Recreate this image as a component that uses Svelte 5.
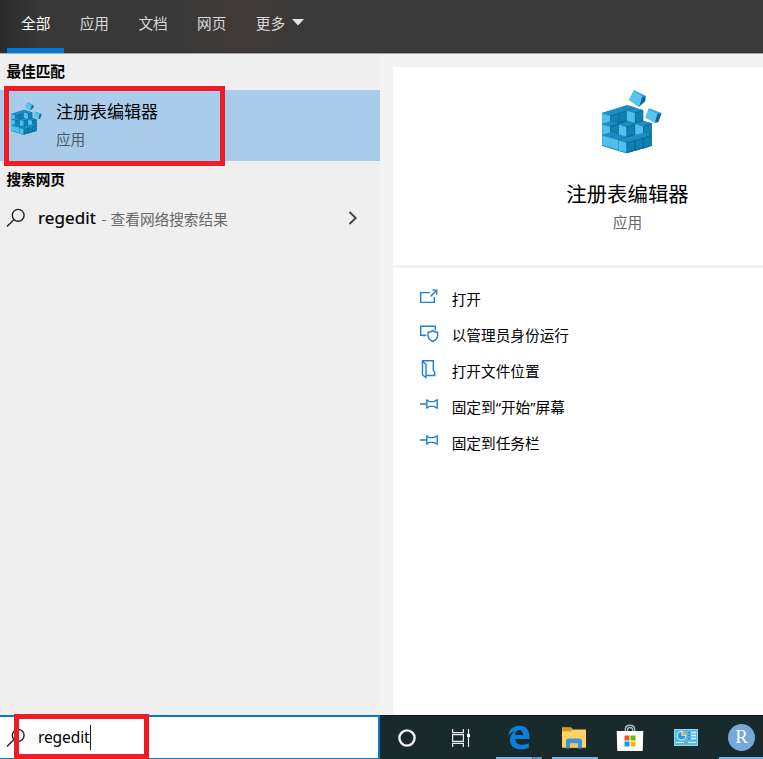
<script>
  const tabs = ['全部', '应用', '文档', '网页'];
  const actions = [
    { icon: 'open', label: '打开' },
    { icon: 'shield', label: '以管理员身份运行' },
    { icon: 'folder', label: '打开文件位置' },
    { icon: 'pin', label: '固定到“开始”屏幕' },
    { icon: 'pin', label: '固定到任务栏' }
  ];
  // Isometric cubes, back to front: left x, y of the left face's top-left corner
  const cubes = [
    [58, 64], [33, 72], [82, 72], [8, 80],
    [57, 114], [107, 112], [8, 113],
    [107, 147], [82, 154], [8, 146], [32, 153], [57, 161]
  ];
</script>

{#snippet registry(w)}
  <svg width={w} height={w * 64 / 60} viewBox="8 11 180 192">
    <path d="M8 80L82 58L131 72V103L157 111V178L82 201L8 178Z" fill="#0a6d9c" />
    {#each cubes as [x, y]}
      <g transform="translate({x} {y})">
        <path d="M0 0L25 -8L50 -1L25 7Z" fill="#1c8fc2" />
        <path d="M0 0L25 7V40L0 33Z" fill="#2b9fd0" />
        <path d="M1 2L24 9V36L1 30Z" fill="#53c0ea" />
        <path d="M25 7L50 -1V32L25 40Z" fill="#086998" />
        <path d="M27 9L48 2V29L27 36Z" fill="#107fb2" />
      </g>
    {/each}
    <path d="M105 12L139 28L126 40L98 22Z" fill="#3fb0dd" />
    <path d="M102 15L129 31L118 62L88 41Z" fill="#58c4ed" />
    <path d="M129 31L139 28L138 45L118 62Z" fill="#086a98" />
    <path d="M149 66L187 80L172 84L145 73Z" fill="#38a9d7" />
    <path d="M147 69L174 82L166 109L137 94Z" fill="#58c4ed" />
    <path d="M174 82L187 80L177 108L166 109Z" fill="#086a98" />
  </svg>
{/snippet}

{#snippet lens()}
  <svg class="lens" width="20" height="20" viewBox="0 0 20 20" fill="none" stroke="#222" stroke-width="1.4">
    <circle cx="12.2" cy="7.3" r="5.9" /><path d="M8 11.5L1 18.5" />
  </svg>
{/snippet}

<div class="screen">
  <header>
    <nav>
      {#each tabs as t, i}
        <span class="tab" class:active={i === 0}>{t}</span>
      {/each}
      <span class="tab more">更多<svg width="12" height="7" viewBox="0 0 12 7"><path d="M0 0H12L6 6.5Z" fill="#e4e4e4" /></svg></span>
    </nav>
  </header>

  <main>
    <section class="results">
      <h2>最佳匹配</h2>
      <div class="best">
        {@render registry(31)}
        <div class="names"><div class="name">注册表编辑器</div><div class="kind">应用</div></div>
        <div class="mark"></div>
      </div>
      <h2>搜索网页</h2>
      <div class="row">
        {@render lens()}
        <span class="query">regedit</span><span class="hint">- 查看网络搜索结果</span>
        <svg class="chev" width="10" height="14" viewBox="0 0 10 14" fill="none" stroke="#444" stroke-width="1.9"><path d="M1.5 1L7.7 7L1.5 13" /></svg>
      </div>
    </section>
    <section class="detail">
      <div class="hero">
        <div class="logo">{@render registry(60)}</div>
        <h1>注册表编辑器</h1>
        <p>应用</p>
      </div>
      <ul>
        {#each actions as a}
          <li>
            <svg width="20" height="20" viewBox="0 0 20 20" fill="none" stroke="#1a80dc" stroke-width="1.4">
              {#if a.icon === 'open'}
                <path d="M11 4.6H1.7V14.4H15.3V9M11.5 8.5L17.6 2.3M13.3 2.1H17.8V6.5" />
              {:else if a.icon === 'shield'}
                <path d="M7.3 11.3H1.7V2.3H16.3V6M5 11.3V12.5" />
                <path d="M13.8 6.5C12.5 7.8 10.8 8.2 9 8.2V11.5C9 14.2 11 16.2 13.8 17.5C16.6 16.2 18.6 14.2 18.6 11.5V8.2C16.8 8.2 15.1 7.8 13.8 6.5Z" />
              {:else if a.icon === 'folder'}
                <path d="M3.5 15V.8H14.3V10.5L15.7 11.7V15.5H7.3M3.5 1L7 4.6V17.5L3.5 15" />
              {:else}
                <path d="M1 8H7.5M7.8 3.2V12.8M7.8 4L10.3 5.6H14.8L18.2 3.9V12.1L14.8 10.4H10.3L7.8 12" />
              {/if}
            </svg>
            <span>{a.label}</span>
          </li>
        {/each}
      </ul>
    </section>
  </main>

  <footer>
    <div class="search">
      {@render lens()}
      <span class="typed">regedit</span><i class="caret"></i>
      <div class="mark"></div>
    </div>
    <div class="taskbar">
      <span class="task cortana"><svg width="20" height="20" viewBox="0 0 20 20"><circle cx="10" cy="10" r="7.6" fill="none" stroke="#f4f4f4" stroke-width="2.4" /></svg></span>
      <span class="task view">
        <svg width="20" height="20" viewBox="0 0 20 20" fill="none" stroke="#e8eded" stroke-width="1.2"><path d="M1.6 1V4.6H12.4V1M1.6 19V15.4H12.4V19M1.6 6.6H12.4V13.4H1.6ZM17.5 1V19" /><path d="M16 6H19V9H16Z" fill="#fff" stroke="none" /></svg>
      </span>
      <span class="task edge running">
        <svg width="24" height="25" viewBox="0 0 24 25"><path d="M1 11C2 4.2 6.7.7 12.3.7C19 .7 22.5 5.5 22.5 11.5V14H8C8.3 18 11.5 19.8 15 19.8C17.8 19.8 20 19 21.8 17.9V22.4C19.7 23.6 17 24.3 14 24.3C7.2 24.3 2.9 20.3 2.9 14.7C2.9 11.1 5 8 8.5 6.3C5.2 6.7 2.6 8.3 1 11ZM8.1 10.1H16.1C16.1 7.1 14.7 5.1 12.3 5.1C9.8 5.1 8.3 7.4 8.1 10.1Z" fill="#0b80df" /></svg>
      </span>
      <span class="task files running">
        <svg width="26" height="22" viewBox="0 0 26 22"><path d="M1 .5H10L12 2.5H25V20.5H1Z" fill="#f6c64e" /><path d="M1 .5H10L12 2.5L10 4.5H1Z" fill="#d99a1b" /><path d="M1 4.5H10.5L12 3H25V20.5H1Z" fill="#ffd367" /><path d="M5 21.5V14Q5 11.5 7.5 11.5H18.5Q21 11.5 21 14V21.5H17V16.5H9V21.5Z" fill="#3d94d9" /><path d="M9 16.5H17V20.5H9Z" fill="#f8c850" /></svg>
      </span>
      <span class="task store">
        <svg width="28" height="28" viewBox="0 0 28 28"><path d="M9.3 7V5.7Q9.3 1.3 14 1.3T18.7 5.7V7M11.5 7V5.8Q11.5 3.5 14 3.5T16.7 5.8V7" fill="none" stroke="#aeb5b5" stroke-width="1.4" /><path d="M.7 7H27.3L26.7 27H1.3Z" fill="#fff" /><path d="M8.5 11.5H13.5V16.5H8.5Z" fill="#f25022" /><path d="M14.5 11.5H19.5V16.5H14.5Z" fill="#6fb900" /><path d="M8.5 17.5H13.5V22.5H8.5Z" fill="#00a1ee" /><path d="M14.5 17.5H19.5V22.5H14.5Z" fill="#ffb900" /></svg>
      </span>
      <span class="task panel">
        <svg width="24" height="17" viewBox="0 0 24 17"><path d="M0 0H24V17H0Z" fill="#8bd5f6" /><path d="M1 1H23V16H1Z" fill="#55b9ea" /><circle cx="7.5" cy="6.8" r="4.7" fill="#e8f7ff" /><path d="M7.5 6.8V3A3.8 3.8 0 1 0 11.3 6.8Z" fill="#2b9ddf" /><path d="M8.4 6V2.5A3.6 3.6 0 0 1 12 6Z" fill="#efaa21" /><path d="M17 3.5H22M17 6.5H22M17 9.5H22" stroke="#d8f4ff" stroke-width="1.3" /><path d="M2 13.5H22" stroke="#e9faff" /><path d="M10 13.5H14" stroke="#c98b2d" stroke-width="1.5" /><path d="M15 3V4.2M15 6V7.2M15 9V10.2" stroke="#087bbc" stroke-width="1.5" /></svg>
      </span>
      <span class="task rapp running"><b>R</b></span>
    </div>
  </footer>
</div>

<style>
  :global(body) { margin: 0; overflow: hidden; }
  .screen { width: 763px; height: 759px; display: flex; flex-direction: column; overflow: hidden; background: #f3f3f3; color: #000; font-family: "Noto Sans CJK SC", "Noto Sans", sans-serif; font-size: 14.67px; }
  svg { display: block; flex: none; }
  h1, h2, p, ul { margin: 0; padding: 0; font-weight: 400; }
  header { height: 53px; box-sizing: border-box; border-bottom: 1px solid #303030; background: linear-gradient(90deg, #2b2b2b 0, #383838 40px, #3a3939 180px, #403a37 235px, #3b3a3a 300px, #3a3a3a 100%); flex: none; }
  nav { display: flex; height: 53px; padding-left: 7px; }
  .tab { box-sizing: border-box; width: 58.7px; height: 53px; padding-left: 14px; line-height: 45px; color: #d8d8d8; white-space: nowrap; }
  .tab.active { width: 57px; margin-right: 1.7px; color: #fff; border-bottom: 5px solid #0078d7; }
  .more { display: flex; align-items: center; gap: 7px; width: 80px; height: 45px; }
  main { height: 661px; border-top: 1px solid #aaa; display: flex; flex: none; }
  .results { width: 380px; background: #efefef; }
  h2 { height: 36px; line-height: 34px; padding-left: 6.5px; font-size: 14.67px; font-weight: 700; letter-spacing: -.05px; }
  .best { position: relative; height: 71px; margin-bottom: 1px; display: flex; background: #a9cceb; padding: 12px 0 0 11px; box-sizing: border-box; }
  .names { padding-left: 13.9px; margin-top: -5px; }
  .name { font-size: 17px; line-height: 28px; }
  .kind { line-height: 27px; color: #4d5a65; }
  .mark { position: absolute; box-sizing: border-box; border: 5px solid #ee1c25; }
  .best .mark { left: 4px; top: -4px; width: 221px; height: 80px; }
  .row { height: 39px; display: flex; align-items: center; padding-left: 6px; }
  .query { font: 400 17px "Noto Sans", sans-serif; width: 59px; margin-left: 12px; letter-spacing: .12px; -webkit-text-stroke: .2px #000; }
  .hint { margin-left: 4.5px; margin-top: 1px; color: #686868; word-spacing: .7px; }
  .chev { margin-left: auto; margin-right: 22px; }
  .detail { flex: 1; padding: 13px 0 0 13px; }
  .hero { height: 201px; background: #fff; border-bottom: 3px solid #f2f2f2; display: flex; flex-direction: column; align-items: center; padding: 23px 0 0 99px; box-sizing: border-box; }
  .logo { padding-left: 8px; }
  h1 { font-size: 20.4px; line-height: 30px; margin-top: 24px; }
  .hero p { color: #666; line-height: 22px; margin-top: 3px; }
  ul { list-style: none; background: #fff; height: 432px; padding: 15px 0 0 26px; }
  li { display: flex; height: 36px; }
  li svg { margin-top: 5px; }
  li span { margin-left: 12.7px; line-height: 33px; font-family: "Noto Sans", "Noto Sans CJK SC", sans-serif; }
  footer { display: flex; height: 44px; flex: none; }
  .search { position: relative; box-sizing: border-box; width: 380px; height: 44px; display: flex; align-items: center; padding-left: 4px; background: #fff; border: 2px solid #0878d3; border-left: 0; border-bottom-width: 1px; }
  .search .lens { margin-left: 2px; }
  .typed { font: 15.6px "Noto Sans", sans-serif; letter-spacing: -.15px; margin: -1px 0 0 12px; width: 51.5px; }
  .caret { width: 1px; height: 25px; background: #222; }
  .search .mark { left: 14px; top: -3px; width: 135px; height: 45px; }
  .taskbar { width: 383px; display: flex; background: #192a2d; border-top: 1px solid #0e1b1d; box-sizing: border-box; overflow: hidden; }
  .task { position: relative; flex: none; display: flex; justify-content: center; align-items: center; height: 43px; box-sizing: border-box; }
  .cortana { width: 54px; }
  .view { width: 54px; }
  .edge { width: 61px; }
  .files { width: 50px; }
  .store { width: 61px; }
  .panel { width: 51px; }
  .rapp { width: 61px; }
  .running::after { content: ""; position: absolute; bottom: 0; left: 8px; width: 46px; height: 2px; background: #76b4e8; }
  .edge.running::after { background: linear-gradient(90deg, #76b4e8 36px, #4b7494 36px, #4b7494 37px, #6091b8 37px); }
  .files.running::after { left: 3px; }
  .rapp.running::after { width: 54px; }
  b { width: 27px; height: 27px; border-radius: 50%; background: #75a8db; color: #fff; font: 19px/26px "Liberation Serif", serif; text-align: center; }
</style>
